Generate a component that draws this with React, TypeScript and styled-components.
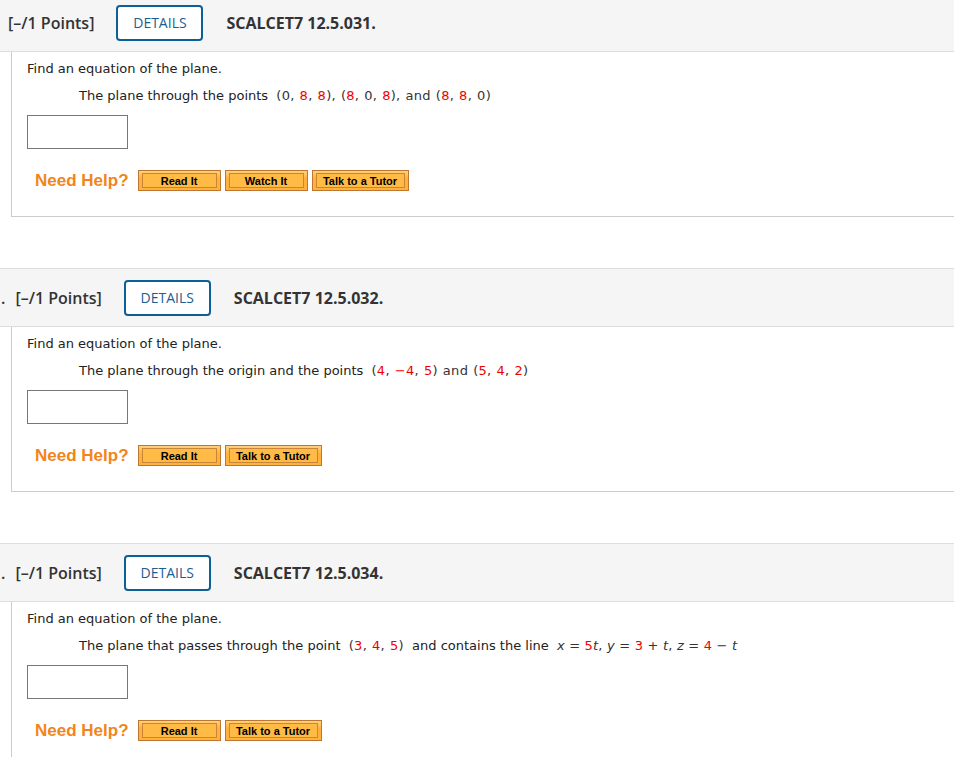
import React from "react";
import styled, { createGlobalStyle } from "styled-components";

const GlobalStyle = createGlobalStyle`
  html, body {
    margin: 0;
    padding: 0;
    background: #fff;
    overflow: hidden;
  }
  body {
    font-family: "DejaVu Sans", Verdana, sans-serif;
    color: #222;
  }
`;

const Page = styled.div`
  margin-top: -7px;
  width: 954px;
`;

const Question = styled.section`
  & + & {
    margin-top: 51px;
  }
`;

const Header = styled.div<{ $inset: number }>`
  display: flex;
  align-items: center;
  height: 57px;
  padding-left: ${(p) => p.$inset}px;
  background: #f5f5f5;
  border-top: 1px solid #ddd;
  border-bottom: 1px solid #ddd;
  font-family: "Open Sans", sans-serif;
  font-size: 16px;
  color: #333;
`;

const Number = styled.span`
  font-weight: 600;
  margin-right: 10px;
`;

const Points = styled.span`
  font-weight: 600;
`;

const DetailsButton = styled.button`
  margin-left: 22px;
  width: 87px;
  height: 36px;
  border: 2px solid #0e5f97;
  border-radius: 4px;
  background: #fff;
  color: #1c5e90;
  font-family: "Open Sans", sans-serif;
  font-size: 14px;
  font-weight: 500;
  padding: 0;
`;

const Title = styled.span`
  margin-left: 23px;
  font-weight: 700;
`;

const Body = styled.div`
  margin-left: 11px;
  border-left: 1px solid #ccc;
  border-bottom: 1px solid #ccc;
  padding: 9px 0 0 15px;
  height: 155px;
  font-size: 13px;
  line-height: 16px;
`;

const Prompt = styled.div`
  color: #222;
`;

const Detail = styled.div`
  margin-top: 11px;
  padding-left: 52px;
  color: #222;
`;

const Math = styled.span<{ $tight?: boolean }>`
  color: #333;
  padding: 0 4px;
  letter-spacing: ${(p) => (p.$tight ? 0.2 : 0.3)}px;
  word-spacing: ${(p) => (p.$tight ? 0 : 0.5)}px;
`;

const Red = styled.span`
  color: #ee0000;
`;

const Var = styled.i`
  font-style: italic;
`;

const AnswerBox = styled.div`
  margin-top: 11px;
  width: 99px;
  height: 32px;
  border: 1px solid #777;
  background: #fff;
`;

const HelpRow = styled.div`
  display: flex;
  align-items: center;
  margin-top: 21px;
  padding-left: 8px;
`;

const NeedHelp = styled.span`
  font-family: "Liberation Sans", Arial, sans-serif;
  font-weight: 700;
  font-size: 17px;
  color: #f28519;
  margin-right: 9px;
`;

const HelpButton = styled.button<{ $w: number }>`
  width: ${(p) => p.$w}px;
  height: 21px;
  margin-right: 4px;
  padding: 2px 3px;
  border: 1px solid #bf7630;
  background: linear-gradient(#ffd27e, #ffb13c 40%, #ffb13c);
  display: flex;
  cursor: pointer;
`;

const HelpLabel = styled.span`
  flex: 1;
  display: flex;
  align-items: center;
  justify-content: center;
  border: 1px solid #c98636;
  background: #ffbb45;
  font-family: "Liberation Sans", Arial, sans-serif;
  font-weight: 700;
  font-size: 11px;
  color: #000;
`;

const HelpButtons = ({ watch }: { watch?: boolean }) => (
  <HelpRow>
    <NeedHelp>Need Help?</NeedHelp>
    <HelpButton $w={83}>
      <HelpLabel>Read It</HelpLabel>
    </HelpButton>
    {watch && (
      <HelpButton $w={83}>
        <HelpLabel>Watch It</HelpLabel>
      </HelpButton>
    )}
    <HelpButton $w={97}>
      <HelpLabel>Talk to a Tutor</HelpLabel>
    </HelpButton>
  </HelpRow>
);

const Point = ({ c }: { c: (string | number)[] }) => (
  <>
    (
    {c.map((v, i) => (
      <React.Fragment key={i}>
        {i > 0 && ", "}
        {v === 0 ? v : <Red>{v}</Red>}
      </React.Fragment>
    ))}
    )
  </>
);

type Q = {
  prefix?: string;
  inset: number;
  code: string;
  detail: React.ReactNode;
  watch?: boolean;
};

const questions: Q[] = [
  {
    inset: 8,
    code: "SCALCET7 12.5.031.",
    watch: true,
    detail: (
      <>
        The plane through the points{" "}
        <Math>
          <Point c={[0, 8, 8]} />, <Point c={[8, 0, 8]} />, and{" "}
          <Point c={[8, 8, 0]} />
        </Math>
      </>
    ),
  },
  {
    prefix: ".",
    inset: 1,
    code: "SCALCET7 12.5.032.",
    detail: (
      <>
        The plane through the origin and the points{" "}
        <Math>
          <Point c={[4, "\u22124", 5]} /> and <Point c={[5, 4, 2]} />
        </Math>
      </>
    ),
  },
  {
    prefix: ".",
    inset: 1,
    code: "SCALCET7 12.5.034.",
    detail: (
      <>
        The plane that passes through the point{" "}
        <Math>
          <Point c={[3, 4, 5]} />
        </Math>{" "}
        and contains the line{" "}
        <Math $tight>
          <Var>x</Var> = <Red>5</Red>
          <Var>t</Var>, <Var>y</Var> = <Red>3</Red> + <Var>t</Var>,{" "}
          <Var>z</Var> = <Red>4</Red> {"\u2212"} <Var>t</Var>
        </Math>
      </>
    ),
  },
];

export default function App() {
  return (
    <Page>
      <GlobalStyle />
      {questions.map((q) => (
        <Question key={q.code}>
          <Header $inset={q.inset}>
            {q.prefix && <Number>{q.prefix}</Number>}
            <Points>[–/1 Points]</Points>
            <DetailsButton>DETAILS</DetailsButton>
            <Title>{q.code}</Title>
          </Header>
          <Body>
            <Prompt>Find an equation of the plane.</Prompt>
            <Detail>{q.detail}</Detail>
            <AnswerBox />
            <HelpButtons watch={q.watch} />
          </Body>
        </Question>
      ))}
    </Page>
  );
}
